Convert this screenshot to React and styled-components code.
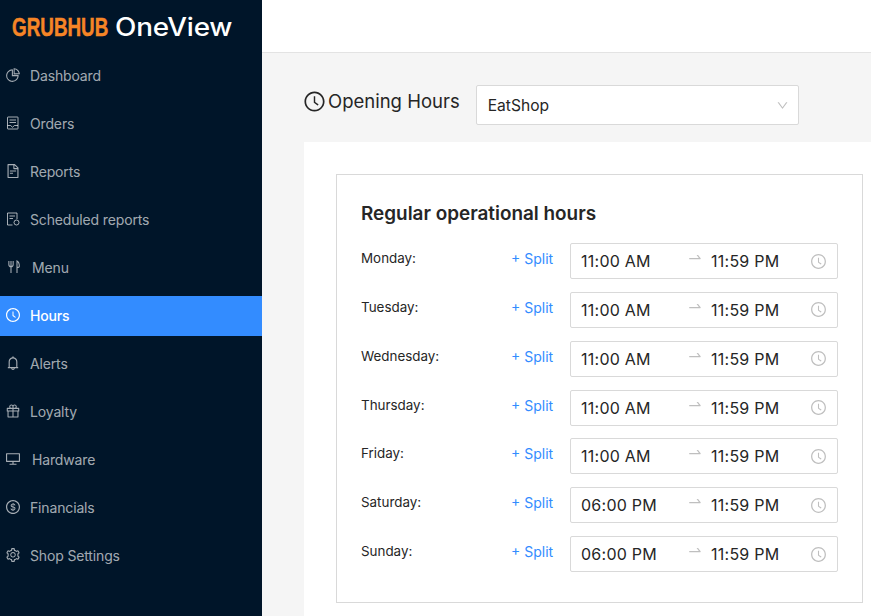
import React from "react";
import styled, { createGlobalStyle } from "styled-components";
import {
  AiOutlinePieChart, AiOutlineFileText, AiOutlineClockCircle, AiOutlineBell, AiOutlineGift,
  AiOutlineDesktop, AiOutlineDollarCircle, AiOutlineSetting, AiOutlineSwapRight, AiOutlineDown,
} from "react-icons/ai";

const Global = createGlobalStyle`
  html, body { margin: 0; padding: 0; height: 100%; overflow: hidden; background: #f5f5f5; }
  body { font-family: Inter, "Liberation Sans", sans-serif; }
  * { box-sizing: border-box; }
`;

const Page = styled.div`display: flex; width: 871px; height: 616px; overflow: hidden;`;
const Sidebar = styled.aside`width: 262px; flex: none; background: #001529; display: flex; flex-direction: column;`;
const Logo = styled.div`height: 52px; padding: 0 0 0 12px; display: flex; align-items: flex-start; gap: 5px;`;
const LogoMark = styled.span`
  width: 98px; flex: none; margin-top: 13px; white-space: nowrap; display: inline-block;
  font-family: "Liberation Sans", sans-serif; font-weight: 700; font-size: 26px;
  color: #f68526; line-height: 28px; transform: scaleX(0.725); transform-origin: left center;
  -webkit-text-stroke: 0.5px #f68526;
`;
const LogoName = styled.span`
  margin-top: 13px; font-family: Inter, sans-serif; font-weight: 500; font-size: 25px; color: #fff;
  letter-spacing: -0.2px; line-height: 28px; display: inline-block; transform: scaleX(1.115); transform-origin: left center;
`;
const Nav = styled.nav`display: flex; flex-direction: column; gap: 8px; padding-top: 4px;`;
const NavItem = styled.a`
  height: 40px; display: flex; align-items: center; padding: 0 0 2px 5px; font-size: 14px; letter-spacing: -0.15px;
  color: ${p => (p.$active ? "#fff" : "rgba(255,255,255,0.65)")};
  background: ${p => (p.$active ? "#338cff" : "transparent")};
  font-weight: ${p => (p.$active ? 500 : 400)};
`;
const NavIcon = styled.span`width: ${p => p.$wide ? 27 : 25}px; flex: none; display: flex; align-items: center; font-size: 16px;`;
const DrawnIcon = styled.svg`margin-left: ${p => p.$inset}px; fill: none; stroke: currentColor;`;

const Main = styled.main`flex: 1; min-width: 0; display: flex; flex-direction: column;`;
const Header = styled.header`height: 53px; flex: none; background: #fff; border-bottom: 1px solid #e3e3e3;`;
const Content = styled.div`flex: 1; padding: 32px 0 0 41px; display: flex; flex-direction: column; overflow: hidden;`;
const TitleRow = styled.div`height: 57px; display: flex; align-items: flex-start; flex: none;`;
const Title = styled.h1`
  margin: 3px 16px 0 0; display: flex; align-items: center; gap: 2px; font-size: 18.5px; font-weight: 400;
  color: #262626; line-height: 26px;
`;
const Select = styled.div`
  width: 323px; height: 40px; background: #fff; border: 1px solid #d9d9d9; border-radius: 2px;
  display: flex; align-items: center; justify-content: space-between; padding: 0 9px 0 11px; font-size: 15.6px; color: #262626;
`;
const Chevron = styled(AiOutlineDown)`font-size: 13px; color: #bfbfbf;`;
const Card = styled.section`flex: 1; margin: 0 -60px 0 1px; background: #fff; padding: 32px 0 0 32px;`;
const Box = styled.div`width: 527px; height: 429px; border: 1px solid #d9d9d9; padding: 26px 24px 0;`;
const BoxTitle = styled.h2`margin: 0 0 16px; font-size: 18.9px; font-weight: 600; color: #262626; line-height: 26px;`;
const Rows = styled.div`display: flex; flex-direction: column; gap: 12.85px;`;
const Row = styled.div`height: 36px; display: flex; align-items: flex-start;`;
const Day = styled.span`width: 150px; flex: none; font-size: 13.4px; line-height: 30px; color: #262626;`;
const SplitLink = styled.a`width: 59px; flex: none; font-size: 14px; line-height: 31px; color: #338cff;`;
const Range = styled.div`
  width: 268px; height: 36px; border: 1px solid #d9d9d9; border-radius: 2px; display: flex; align-items: center;
  padding: 0 10px; font-size: 16px; letter-spacing: 0.25px; color: #262626;
`;
const TimeText = styled.span`width: ${p => p.$w}px; flex: none;`;
const ArrowIcon = styled(AiOutlineSwapRight)`font-size: 16px; color: #bfbfbf; width: 22px; margin: 0 5px 8px 0;`;
const RangeClock = styled(AiOutlineClockCircle)`font-size: 17px; color: #bfbfbf; margin-left: auto;`;

const OrdersIcon = () => (
  <DrawnIcon $inset={1} width="14" height="14" viewBox="0 0 14 14" strokeWidth="1">
    <rect x="1.5" y="1" width="10.5" height="12" rx="0.5" /><path d="M3.5 4h6.5M3.5 6.5h6.5M1.5 9.5h3l2 1.7 2-1.7h3.5" />
  </DrawnIcon>
);
const ScheduledIcon = () => (
  <DrawnIcon $inset={1} width="14" height="14" viewBox="0 0 14 14" strokeWidth="1">
    <path d="M6.5 13H1.5V1h9.5v6" /><path d="M3.5 4h5.5M3.5 6.5h3.5" /><circle cx="10.5" cy="10.5" r="2.5" />
  </DrawnIcon>
);
const MenuIcon = () => (
  <DrawnIcon $inset={3} width="12" height="14" viewBox="0 0 14 14" preserveAspectRatio="none" strokeWidth="1.25">
    <path d="M1 1v3.5c0 1.5 1 2.2 2.5 2.2S6 6 6 4.5V1M3.5 1v12M10.5 13V1c1.6.6 2.7 2.6 2.7 5.5 0 .8-1 1-2.7 1" />
  </DrawnIcon>
);

const items = [
  ["Dashboard", <AiOutlinePieChart />],
  ["Orders", <OrdersIcon />],
  ["Reports", <AiOutlineFileText />],
  ["Scheduled reports", <ScheduledIcon />],
  ["Menu", <MenuIcon />, false, true],
  ["Hours", <AiOutlineClockCircle />, true],
  ["Alerts", <AiOutlineBell />],
  ["Loyalty", <AiOutlineGift />],
  ["Hardware", <AiOutlineDesktop />, false, true],
  ["Financials", <AiOutlineDollarCircle />],
  ["Shop Settings", <AiOutlineSetting />],
];
const hours = [
  ["Monday", "11:00 AM"], ["Tuesday", "11:00 AM"], ["Wednesday", "11:00 AM"], ["Thursday", "11:00 AM"],
  ["Friday", "11:00 AM"], ["Saturday", "06:00 PM"], ["Sunday", "06:00 PM"],
];

export default function App() {
  return (
    <Page>
      <Global />
      <Sidebar>
        <Logo><LogoMark>GRUBHUB</LogoMark><LogoName>OneView</LogoName></Logo>
        <Nav>
          {items.map(([label, icon, active, wide]) => (
            <NavItem key={label} $active={active}><NavIcon $wide={wide}>{icon}</NavIcon>{label}</NavItem>
          ))}
        </Nav>
      </Sidebar>
      <Main>
        <Header />
        <Content>
          <TitleRow>
            <Title><AiOutlineClockCircle size={23} />Opening Hours</Title>
            <Select>EatShop<Chevron /></Select>
          </TitleRow>
          <Card>
            <Box>
              <BoxTitle>Regular operational hours</BoxTitle>
              <Rows>
                {hours.map(([day, from]) => (
                  <Row key={day}>
                    <Day>{day}:</Day>
                    <SplitLink>+ Split</SplitLink>
                    <Range>
                      <TimeText $w={103}>{from}</TimeText><ArrowIcon /><TimeText $w={72}>11:59 PM</TimeText><RangeClock />
                    </Range>
                  </Row>
                ))}
              </Rows>
            </Box>
          </Card>
        </Content>
      </Main>
    </Page>
  );
}
